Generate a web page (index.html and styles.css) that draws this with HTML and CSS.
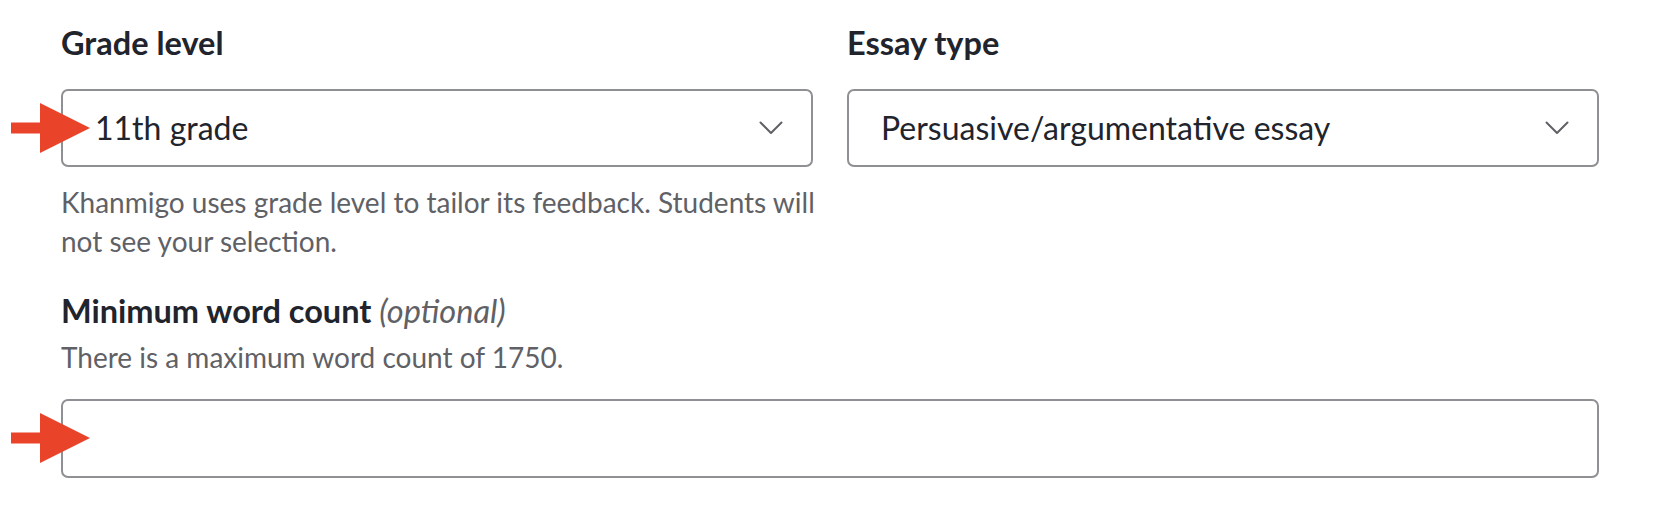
FILE: index.html
```html
<!DOCTYPE html>
<html lang="en">
<head>
<meta charset="utf-8">
<title>Essay settings</title>
<link rel="stylesheet" href="styles.css">
</head>
<body>
<div class="form">
  <div class="row">
    <div class="field">
      <div class="label">Grade level</div>
      <div class="control-wrap">
        <svg class="pointer" width="80" height="50" viewBox="0 0 80 50" aria-hidden="true"><rect x="0" y="19.5" width="32" height="11" fill="#e9432a"/><polygon points="29,0 79,25 29,50" fill="#e9432a"/></svg>
        <div class="select">
          <span class="value">11th grade</span>
          <svg class="chevron" width="24" height="14" viewBox="0 0 24 14" aria-hidden="true"><path d="M1.5 1.5 L12 12 L22.5 1.5" fill="none" stroke="#5f6166" stroke-width="2" stroke-linecap="round" stroke-linejoin="round"/></svg>
        </div>
      </div>
      <p class="help help-wrap">Khanmigo uses grade level to tailor its feedback. Students will not see your selection.</p>
    </div>
    <div class="field">
      <div class="label">Essay type</div>
      <div class="control-wrap">
        <div class="select">
          <span class="value">Persuasive/argumentative essay</span>
          <svg class="chevron" width="24" height="14" viewBox="0 0 24 14" aria-hidden="true"><path d="M1.5 1.5 L12 12 L22.5 1.5" fill="none" stroke="#5f6166" stroke-width="2" stroke-linecap="round" stroke-linejoin="round"/></svg>
        </div>
      </div>
    </div>
  </div>
  <div class="field wide">
    <div class="label">Minimum word count <span class="optional">(optional)</span></div>
    <p class="help help-top">There is a maximum word count of 1750.</p>
    <div class="control-wrap">
      <svg class="pointer" width="80" height="50" viewBox="0 0 80 50" aria-hidden="true"><rect x="0" y="19.5" width="32" height="11" fill="#e9432a"/><polygon points="29,0 79,25 29,50" fill="#e9432a"/></svg>
      <div class="input"></div>
    </div>
  </div>
</div>
</body>
</html>
```

FILE: styles.css
```css
* { box-sizing: border-box; }

html, body {
  margin: 0;
  padding: 0;
  background: #ffffff;
}

body {
  font-family: Lato, "Noto Sans", "Liberation Sans", sans-serif;
  color: #21242c;
}

.form {
  width: 1599px;
  padding: 23px 0 0 61px;
}

.row {
  display: grid;
  grid-template-columns: 752px 752px;
  column-gap: 34px;
}

.field {
  display: flex;
  flex-direction: column;
}

.label {
  font-size: 32.5px;
  line-height: 40px;
  font-weight: 700;
  color: #21242c;
  margin-bottom: 26px;
}

.optional {
  font-weight: 400;
  font-style: italic;
  color: #5f6166;
}

.control-wrap {
  position: relative;
}

.pointer {
  position: absolute;
  left: -50px;
  top: 50%;
  margin-top: -25px;
  z-index: 2;
}

.select {
  height: 78px;
  border: 2px solid #8e9094;
  border-radius: 7px;
  background: #fff;
  display: flex;
  align-items: center;
  justify-content: space-between;
  padding: 0 28px 0 32px;
}

.value {
  font-size: 32px;
  line-height: 38px;
  color: #21242c;
}

.chevron {
  display: block;
}

.help {
  margin: 16px 0 0 0;
  font-size: 28px;
  line-height: 38.5px;
  color: #5f6166;
}

.help-wrap {
  width: 775px;
}

.wide {
  margin-top: 31px;
  width: 1538px;
}

.wide .label {
  margin-bottom: 0;
}

.help-top {
  margin: 7px 0 22px 0;
}

.input {
  height: 79px;
  border: 2px solid #8e9094;
  border-radius: 7px;
  background: #fff;
}
```
